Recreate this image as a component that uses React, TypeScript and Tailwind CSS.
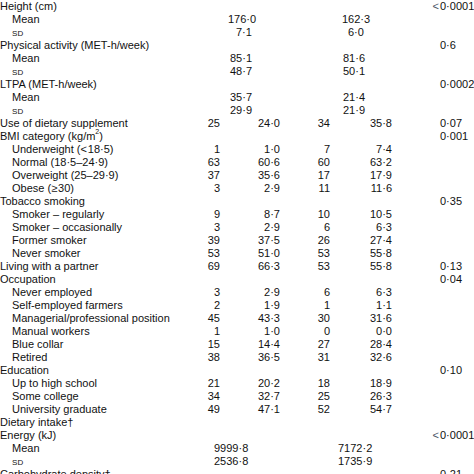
import React from "react";

type Counts = [string, string, string, string];

type Row = {
  label: React.ReactNode;
  sub?: boolean;
  sd?: boolean;
  counts?: Counts;
  // mean / SD rows: [men value, men pad class, women value, women pad class]
  mean?: [string, string, string, string];
  p?: string;
  lt?: boolean;
};

const rows: Row[] = [
  { label: "Height (cm)", p: "0·0001", lt: true },
  { label: "Mean", sub: true, mean: ["176·0", "pl-[58px]", "162·3", "pl-[7px]"] },
  { label: "SD", sub: true, sd: true, mean: ["7·1", "pl-[66px]", "6·0", "pl-[13px]"] },
  { label: "Physical activity (MET-h/week)", p: "0·6" },
  { label: "Mean", sub: true, mean: ["85·1", "pl-[60px]", "81·6", "pl-[8px]"] },
  { label: "SD", sub: true, sd: true, mean: ["48·7", "pl-[60px]", "50·1", "pl-[8px]"] },
  { label: "LTPA (MET-h/week)", p: "0·0002" },
  { label: "Mean", sub: true, mean: ["35·7", "pl-[60px]", "21·4", "pl-[8px]"] },
  { label: "SD", sub: true, sd: true, mean: ["29·9", "pl-[60px]", "21·9", "pl-[8px]"] },
  { label: "Use of dietary supplement", counts: ["25", "24·0", "34", "35·8"], p: "0·07" },
  {
    label: (
      <>
        BMI category (kg/m<sup className="text-[7px] relative -top-[1px] align-super">2</sup>)
      </>
    ),
    p: "0·001",
  },
  { label: "Underweight (<\u200a18·5)", sub: true, counts: ["1", "1·0", "7", "7·4"] },
  { label: "Normal (18·5–24·9)", sub: true, counts: ["63", "60·6", "60", "63·2"] },
  { label: "Overweight (25–29·9)", sub: true, counts: ["37", "35·6", "17", "17·9"] },
  { label: "Obese (≥\u200a30)", sub: true, counts: ["3", "2·9", "11", "11·6"] },
  { label: "Tobacco smoking", p: "0·35" },
  { label: "Smoker – regularly", sub: true, counts: ["9", "8·7", "10", "10·5"] },
  { label: "Smoker – occasionally", sub: true, counts: ["3", "2·9", "6", "6·3"] },
  { label: "Former smoker", sub: true, counts: ["39", "37·5", "26", "27·4"] },
  { label: "Never smoker", sub: true, counts: ["53", "51·0", "53", "55·8"] },
  { label: "Living with a partner", counts: ["69", "66·3", "53", "55·8"], p: "0·13" },
  { label: "Occupation", p: "0·04" },
  { label: "Never employed", sub: true, counts: ["3", "2·9", "6", "6·3"] },
  { label: "Self-employed farmers", sub: true, counts: ["2", "1·9", "1", "1·1"] },
  { label: "Managerial/professional position", sub: true, counts: ["45", "43·3", "30", "31·6"] },
  { label: "Manual workers", sub: true, counts: ["1", "1·0", "0", "0·0"] },
  { label: "Blue collar", sub: true, counts: ["15", "14·4", "27", "28·4"] },
  { label: "Retired", sub: true, counts: ["38", "36·5", "31", "32·6"] },
  { label: "Education", p: "0·10" },
  { label: "Up to high school", sub: true, counts: ["21", "20·2", "18", "18·9"] },
  { label: "Some college", sub: true, counts: ["34", "32·7", "25", "26·3"] },
  { label: "University graduate", sub: true, counts: ["49", "47·1", "52", "54·7"] },
  { label: "Dietary intake†" },
  { label: "Energy (kJ)", p: "0·0001", lt: true },
  { label: "Mean", sub: true, mean: ["9999·8", "pl-[44px]", "7172·2", "pl-[3px]"] },
  { label: "SD", sub: true, sd: true, mean: ["2536·8", "pl-[44px]", "1735·9", "pl-[3px]"] },
  { label: "Carbohydrate density†", p: "0·21" },
];

function TableRow({ row }: { row: Row }) {
  return (
    <div className="flex h-[13px] items-start whitespace-nowrap">
      <div className={`w-[170px] shrink-0 ${row.sub ? "pl-[12px]" : ""}`}>
        {row.sd ? <span className="text-[8px] tracking-[0.2px]">SD</span> : row.label}
      </div>

      {row.counts ? (
        <>
          <div className="w-[50px] shrink-0 text-right">{row.counts[0]}</div>
          <div className="w-[60px] shrink-0 text-right">{row.counts[1]}</div>
          <div className="w-[50px] shrink-0 text-right">{row.counts[2]}</div>
          <div className="w-[62px] shrink-0 text-right">{row.counts[3]}</div>
          <div className="w-[38px] shrink-0" />
        </>
      ) : row.mean ? (
        <>
          <div className={`w-[165px] shrink-0 ${row.mean[1]}`}>{row.mean[0]}</div>
          <div className={`w-[95px] shrink-0 ${row.mean[3]}`}>{row.mean[2]}</div>
        </>
      ) : (
        <div className="w-[260px] shrink-0" />
      )}

      {row.p && (
        <div className="flex shrink-0">
          <span className="w-[10px] pr-[1px] text-right text-[11px] text-gray-600">{row.lt ? "<" : ""}</span>
          <span>{row.p}</span>
        </div>
      )}
    </div>
  );
}

export default function App() {
  return (
    <div
      className="w-[474px] h-[474px] overflow-hidden bg-white text-[#111] text-[11px] leading-[13px]"
      style={{ fontFamily: '"Liberation Sans", Arial, sans-serif' }}
    >
      {rows.map((row, i) => (
        <TableRow key={i} row={row} />
      ))}
    </div>
  );
}
